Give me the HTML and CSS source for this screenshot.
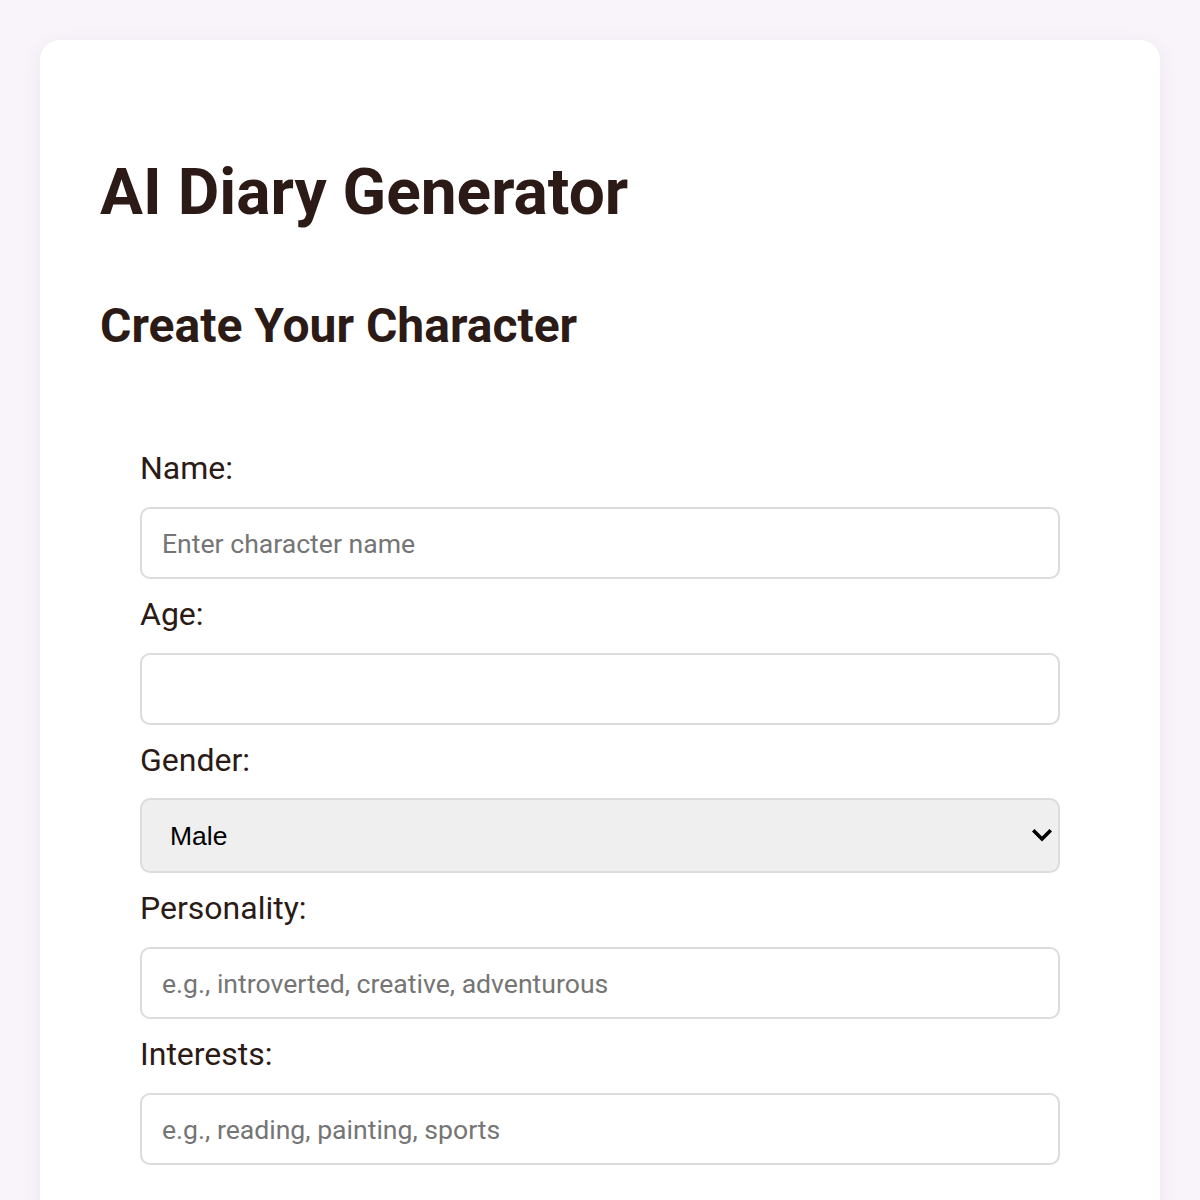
FILE: index.html
```html
<!DOCTYPE html>
<html lang="en">
<head>
<meta charset="utf-8">
<title>AI Diary Generator</title>
<link rel="stylesheet" href="styles.css">
</head>
<body>
<main class="card">
  <h1 class="title">AI Diary Generator</h1>
  <h2 class="subtitle">Create Your Character</h2>
  <form class="form">
    <label class="label" for="name">Name:</label>
    <input class="field" id="name" type="text" placeholder="Enter character name">
    <label class="label" for="age">Age:</label>
    <input class="field" id="age" type="number">
    <label class="label" for="gender">Gender:</label>
    <div class="select-wrap">
      <select class="select" id="gender">
        <option>Male</option>
        <option>Female</option>
        <option>Other</option>
      </select>
      <svg class="chevron" width="20" height="13" viewBox="0 0 20 13" aria-hidden="true">
        <path d="M2.5 2.5 L10 10 L17.5 2.5" fill="none" stroke="#000" stroke-width="3.6" stroke-linecap="square" stroke-linejoin="miter"/>
      </svg>
    </div>
    <label class="label" for="personality">Personality:</label>
    <input class="field" id="personality" type="text" placeholder="e.g., introverted, creative, adventurous">
    <label class="label" for="interests">Interests:</label>
    <input class="field" id="interests" type="text" placeholder="e.g., reading, painting, sports">
  </form>
</main>
</body>
</html>
```
FILE: styles.css
```css
html, body {
  margin: 0;
  padding: 0;
}
body {
  background: #f9f3fa;
  font-family: Roboto, "Liberation Sans", sans-serif;
  color: #2b1a15;
  padding: 40px;
}
.card {
  background: #ffffff;
  border-radius: 20px;
  box-shadow: 0 4px 20px rgba(60, 30, 80, 0.06);
  padding: 115px 60px 60px;
  min-height: 1200px;
}
.title {
  font-size: 64px;
  font-weight: 700;
  line-height: 75px;
  margin: 0;
}
.subtitle {
  font-size: 48px;
  font-weight: 700;
  line-height: 56px;
  margin: 68px 0 0;
}
.form {
  padding: 96px 40px 0;
  display: flex;
  flex-direction: column;
}
.label {
  font-size: 32px;
  line-height: 37px;
  margin-bottom: 20px;
}
.field {
  box-sizing: border-box;
  height: 72px;
  border: 2px solid #dcdcdc;
  border-radius: 10px;
  padding: 0 20px;
  font-family: Roboto, "Liberation Sans", sans-serif;
  font-size: 26.6px;
  color: #2b1a15;
  background: #fff;
  margin-bottom: 17px;
  outline: none;
}
.field::placeholder {
  color: #757575;
}
.select-wrap {
  position: relative;
  margin-top: -1px;
  margin-bottom: 17px;
}
.select {
  box-sizing: border-box;
  display: block;
  width: 100%;
  height: 75px;
  border: 2px solid #dcdcdc;
  border-radius: 10px;
  padding: 0 28px;
  font-family: "Liberation Sans", Arial, sans-serif;
  font-size: 26.5px;
  color: #000;
  background-color: #efefef;
  -webkit-appearance: none;
  appearance: none;
  margin: 0;
}
.chevron {
  position: absolute;
  right: 8px;
  top: 31px;
  pointer-events: none;
}
```
